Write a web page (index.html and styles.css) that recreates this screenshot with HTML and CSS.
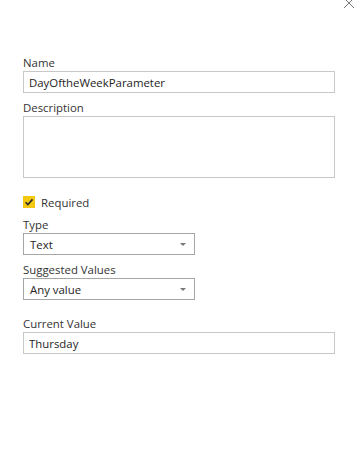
FILE: index.html
```html
<!DOCTYPE html>
<html lang="en">
<head>
    <meta charset="UTF-8">
    <meta name="viewport" content="width=device-width, initial-scale=1.0">
    <title>Manage Parameters</title>
    <link rel="stylesheet" href="styles.css">
</head>
<body>
    <div class="panel">
        <button class="close-btn" aria-label="Close">
            <svg width="12" height="12" viewBox="0 0 12 12">
                <path d="M1 1 L11 11 M11 1 L1 11" stroke="#777" stroke-width="1" fill="none"/>
            </svg>
        </button>

        <div class="form">
            <label class="field-label" for="name">Name</label>
            <input class="text-input" type="text" id="name" value="DayOftheWeekParameter">

            <label class="field-label gap-sm" for="description">Description</label>
            <textarea class="text-area" id="description"></textarea>

            <label class="check-row">
                <span class="check-box">
                    <svg width="12" height="12" viewBox="0 0 12 12">
                        <path d="M2.6 6.2 L4.9 8.6 L9.5 3.4" stroke="#2b2b2b" stroke-width="1.6" fill="none"/>
                    </svg>
                </span>
                Required
            </label>

            <div class="field-label gap-xs">Type</div>
            <div class="select-box">
                <span>Text</span>
                <span class="arrow"></span>
            </div>

            <div class="field-label gap-sm">Suggested Values</div>
            <div class="select-box">
                <span>Any value</span>
                <span class="arrow"></span>
            </div>

            <label class="field-label gap-lg" for="current">Current Value</label>
            <input class="text-input" type="text" id="current" value="Thursday">
        </div>
    </div>
</body>
</html>
```

FILE: styles.css
```css
* {
    box-sizing: border-box;
}
body {
    margin: 0;
    background-color: #fff;
    font-family: 'Open Sans', 'Noto Sans', sans-serif;
    font-size: 11.4px;
    color: #252423;
}
.panel {
    position: relative;
    width: 364px;
    height: 450px;
    overflow: hidden;
}
.close-btn {
    position: absolute;
    top: -3px;
    right: 9px;
    width: 12px;
    height: 12px;
    padding: 0;
    border: none;
    background: none;
}
.close-btn svg {
    display: block;
}
.form {
    display: flex;
    flex-direction: column;
    width: 312px;
    margin-left: 23px;
    padding-top: 54px;
}
.field-label {
    display: block;
    height: 17px;
    line-height: 17px;
    color: #333;
}
.gap-xs {
    margin-top: 6px;
}
.gap-sm {
    margin-top: 6px;
}
.gap-lg {
    margin-top: 15px;
}
.text-input {
    width: 312px;
    height: 22px;
    padding: 0 5px;
    border: 1px solid #c8c8c8;
    font-family: inherit;
    font-size: 11.4px;
    color: #252423;
    outline: none;
}
.text-area {
    width: 312px;
    height: 62px;
    border: 1px solid #c8c8c8;
    resize: none;
    outline: none;
}
.check-row {
    display: flex;
    align-items: center;
    gap: 6px;
    height: 16px;
    margin-top: 16px;
    color: #333;
}
.check-box {
    display: block;
    width: 12px;
    height: 12px;
    background-color: #f2c811;
}
.check-box svg {
    display: block;
}
.select-box {
    display: flex;
    align-items: center;
    justify-content: space-between;
    width: 172px;
    height: 22px;
    padding: 0 8px 0 6px;
    border: 1px solid #a6a6a6;
    color: #252423;
}
.arrow {
    width: 0;
    height: 0;
    border-left: 3px solid transparent;
    border-right: 3px solid transparent;
    border-top: 3px solid #777;
}
```
